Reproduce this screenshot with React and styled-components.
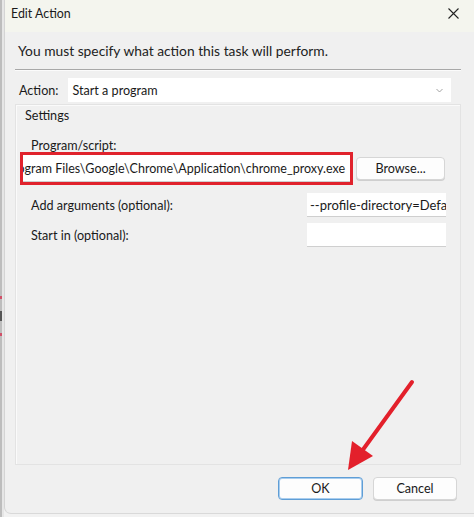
import React from "react";
import styled, { createGlobalStyle } from "styled-components";

const GlobalStyle = createGlobalStyle`
  html, body {
    margin: 0;
    padding: 0;
    background: #f3f3f3;
  }
  #root {
    width: 474px;
    height: 517px;
    overflow: hidden;
  }
`;

const Page = styled.div`
  position: relative;
  display: flex;
  width: 474px;
  height: 517px;
  background: #f2f2f2;
  font-family: Lato, "Noto Sans", sans-serif;
  font-size: 12.6px;
  color: #1a1a1a;
`;

const BackWindow = styled.div`
  width: 4px;
  height: 100%;
  background: linear-gradient(90deg, #bdbdbd 0 2px, #e6e6e6 2px 4px);
  display: flex;
  flex-direction: column;
  gap: 12px;
  padding-top: 296px;
  box-sizing: border-box;
`;

const Mark = styled.div`
  width: 2px;
  height: ${({ $h }) => $h}px;
  background: ${({ $c }) => $c};
`;

const Dialog = styled.div`
  flex: 1;
  height: 513px;
  display: flex;
  flex-direction: column;
  background: #f0f0f0;
  border-left: 1px solid #d4d4d4;
  border-bottom: 1px solid #d9d9d9;
  border-bottom-left-radius: 7px;
  overflow: hidden;
`;

const TitleBar = styled.div`
  height: 32px;
  box-sizing: border-box;
  display: flex;
  align-items: center;
  justify-content: space-between;
  padding: 0 15px 5px 6px;
  background: #f4f5ee;
  font-size: 12.4px;
`;

const Close = styled.svg`
  width: 11px;
  height: 11px;
`;

const Body = styled.div`
  flex: 1;
  display: flex;
  flex-direction: column;
  padding: 0 13px 0 10px;
`;

const Message = styled.div`
  height: 37px;
  display: flex;
  align-items: center;
  padding-left: 3px;
  font-size: 13.8px;
  color: #222;
`;

const Separator = styled.div`
  height: 0;
  border-top: 1px solid #a8a8a8;
  border-bottom: 1px solid #fbfbfb;
  margin-bottom: 7px;
`;

const ActionRow = styled.div`
  display: flex;
  align-items: center;
  gap: 10px;
  padding-left: 4px;
  margin-bottom: 2px;
`;

const Select = styled.div`
  flex: 1;
  height: 24px;
  margin-right: 10px;
  display: flex;
  align-items: center;
  justify-content: space-between;
  padding: 0 8px 0 4px;
  background: #ffffff;
`;

const Chevron = styled.svg`
  width: 7px;
  height: 5px;
`;

const Group = styled.div`
  height: 361px;
  box-sizing: border-box;
  display: flex;
  flex-direction: column;
  border: 1px solid #e3e3e3;
  box-shadow: inset 1px 1px 0 #fafafa;
  padding: 3px 14px 0 4px;
`;

const GroupTitle = styled.div`
  height: 16px;
  margin-left: 5px;
  margin-bottom: 15px;
  line-height: 16px;
`;

const FieldLabel = styled.div`
  height: 13px;
  line-height: 14px;
  margin-left: 11px;
`;

const ProgramRow = styled.div`
  display: flex;
  align-items: center;
  gap: 3px;
  margin-bottom: 8px;
`;

const Highlight = styled.div`
  width: 327px;
  height: 27px;
  border: 3px solid #e0222c;
  display: flex;
`;

const Input = styled.div`
  flex: ${({ $grow }) => ($grow ? 1 : "none")};
  width: ${({ $w }) => ($w ? `${$w}px` : "auto")};
  height: ${({ $h }) => $h || 24}px;
  background: #ffffff;
  border-bottom: 1px solid #cfcfcf;
  box-sizing: border-box;
  display: flex;
  align-items: center;
  justify-content: ${({ $end }) => ($end ? "flex-end" : "flex-start")};
  overflow: hidden;
  white-space: nowrap;
  font-size: ${({ $size }) => $size || 13}px;
  color: #1a1a1a;
  padding: ${({ $end }) => ($end ? "0 4px 0 0" : "0 0 0 3px")};
`;

const Caret = styled.span`
  display: inline-block;
  width: 1px;
  height: 17px;
  margin-left: 1px;
  background: #111;
`;

const Button = styled.div`
  width: ${({ $w }) => $w}px;
  height: 23px;
  box-sizing: border-box;
  display: flex;
  align-items: center;
  justify-content: center;
  background: #fdfdfd;
  border: 1px solid ${({ $primary }) => ($primary ? "#5f9ed6" : "#d6d6d6")};
  box-shadow: ${({ $primary }) => ($primary ? "inset 0 0 0 1px #a9cdee" : "0 1px 0 #cfcfcf")};
  border-radius: 4px;
  color: #1a1a1a;
`;

const FieldRow = styled.div`
  display: flex;
  align-items: center;
  justify-content: space-between;
  height: 24px;
  margin-bottom: 6px;
  padding-left: 11px;
`;

const ButtonRow = styled.div`
  display: flex;
  justify-content: flex-end;
  gap: 10px;
  margin-top: 12px;
  padding-right: 4px;
`;

const Arrow = styled.svg`
  position: absolute;
  left: 0;
  top: 0;
  width: 474px;
  height: 517px;
  pointer-events: none;
`;

export default function App() {
  return (
    <Page>
      <GlobalStyle />
      <BackWindow>
        <Mark $h={3} $c="#d05068" />
        <Mark $h={10} $c="#555" />
        <Mark $h={3} $c="#d05068" />
      </BackWindow>
      <Dialog>
        <TitleBar>
          <span>Edit Action</span>
          <Close viewBox="0 0 11 11">
            <path d="M0.5 0.5 L10.5 10.5 M10.5 0.5 L0.5 10.5" stroke="#222" strokeWidth="1.1" />
          </Close>
        </TitleBar>
        <Body>
          <Message>You must specify what action this task will perform.</Message>
          <Separator />
          <ActionRow>
            <span>Action:</span>
            <Select>
              <span>Start a program</span>
              <Chevron viewBox="0 0 7 5">
                <path d="M0.5 1 L3.5 4 L6.5 1" stroke="#999" fill="none" strokeWidth="0.9" />
              </Chevron>
            </Select>
          </ActionRow>
          <Group>
            <GroupTitle>Settings</GroupTitle>
            <FieldLabel>Program/script:</FieldLabel>
            <ProgramRow>
              <Highlight>
                <Input $grow $end $h={27} $size={12.5}>
                  C:\Program Files\Google\Chrome\Application\chrome_proxy.exe
                  <Caret />
                </Input>
              </Highlight>
              <Button $w={89}>Browse...</Button>
            </ProgramRow>
            <FieldRow>
              <span>Add arguments (optional):</span>
              <Input $w={139}>--profile-directory=Default</Input>
            </FieldRow>
            <FieldRow>
              <span>Start in (optional):</span>
              <Input $w={139} />
            </FieldRow>
          </Group>
          <ButtonRow>
            <Button $w={85} $primary>OK</Button>
            <Button $w={84}>Cancel</Button>
          </ButtonRow>
        </Body>
      </Dialog>
      <Arrow viewBox="0 0 474 517">
        <line x1="412" y1="382" x2="362" y2="451" stroke="#e3202b" strokeWidth="4" strokeLinecap="round" />
        <polygon points="348,470 352,441 373,456" fill="#e3202b" />
      </Arrow>
    </Page>
  );
}
